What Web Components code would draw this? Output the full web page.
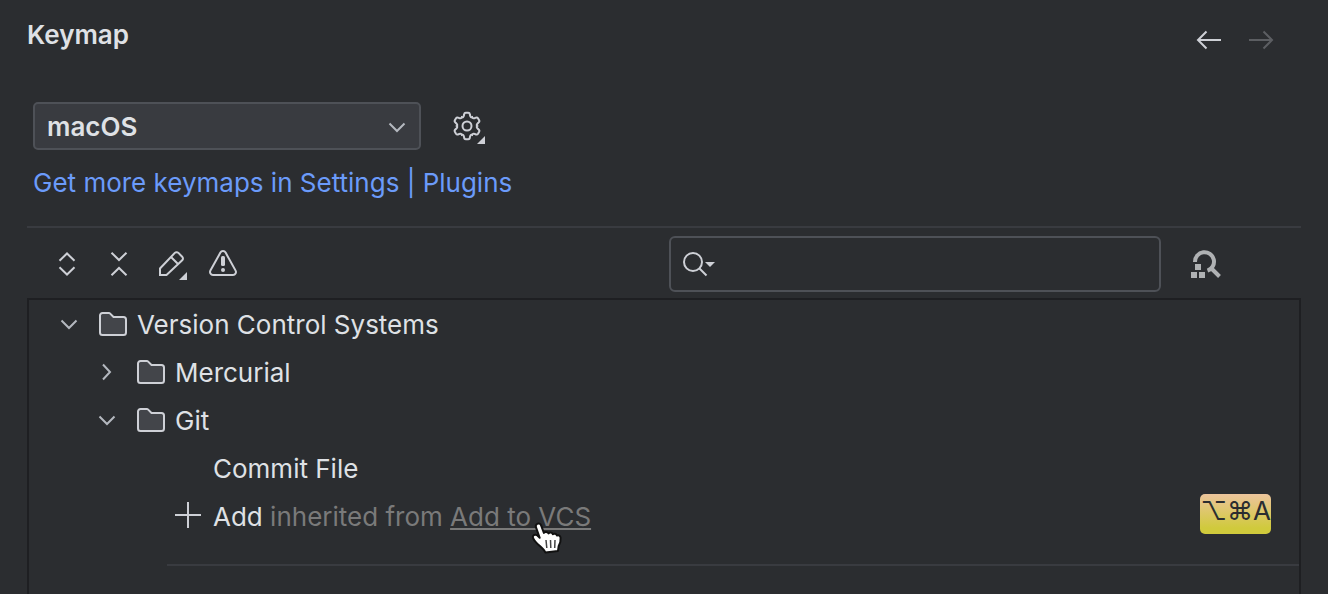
<!DOCTYPE html>
<html lang="en">
<head>
<meta charset="utf-8">
<title>Keymap</title>
<style>
  html {
    background: #2b2d30;
  }
  body {
    margin: 0;
    height: 100vh;
    overflow: hidden;
    font: 26px/32px Inter, "Liberation Sans", sans-serif;
    color: #dfe1e5;
  }
</style>
</head>
<body>
<keymap-settings></keymap-settings>

<script>

/**
 * Outline of the six-toothed settings cog
 *
 * @returns {string}
 */
function cogPath() {
  const point = (radius, degrees) => {
    const angle = degrees * Math.PI / 180;
    return `${ (16 + radius * Math.cos(angle)).toFixed(2) } ${ (16 + radius * Math.sin(angle)).toFixed(2) }`;
  };
  let d = '';
  for (let a = -90; a < 270; a += 60) {
    d += `${ d ? 'L' : 'M' }${ point(11.4, a - 15) }`;
    d += `Q${ point(13.6, a - 12) } ${ point(13.4, a - 5) }L${ point(13.4, a + 5) }`;
    d += `Q${ point(13.6, a + 12) } ${ point(11.4, a + 15) }Q${ point(9, a + 24) } ${ point(10.2, a + 30) }Q${ point(9, a + 36) } ${ point(11.4, a + 45) }`;
  }
  return d + 'z';
}

const ICONS = {
  'back': '<path d="M28 16H5M13.5 7.5L5 16l8.5 8.5"/>',
  'forward': '<path d="M4 16h23M18.5 7.5L27 16l-8.5 8.5"/>',
  'chevron-down': '<path d="M8.5 12.5L16 20l7.5-7.5"/>',
  'chevron-right': '<path d="M12 8.5L19 16l-7 7.5"/>',
  'expand-all': '<path d="M8.5 12.7L16 5.5l7.5 7.2M8.5 19.3L16 26.5l7.5-7.2"/>',
  'collapse-all': '<path d="M8.5 4.7L16 12l7.5-7.3M8.5 27.3L16 20l7.5 7.3"/>',
  'edit': `<path d="M5 27v-6.5L19.8 4.900a2.500 2.500 0 0 1 3.600 0l3.800 3.800a2.500 2.500 0 0 1 0 3.600L11.500 27zM16 9l7.500 7.500"/>
    <path class="solid" d="M32 24v8h-8z"/>`,
  'warning': `<path d="M13.4 4.600L3.400 22.600a3 3 0 0 0 2.600 4.400h20a3 3 0 0 0 2.600-4.400l-10-18a3 3 0 0 0-5.200 0z"/>
    <rect class="solid" x="14" y="8" width="4" height="10" rx="1.5"/><circle class="solid" cx="16" cy="22" r="2"/>`,
  'settings': `<path d="${ cogPath() }"/><circle cx="16" cy="16" r="4.5"/><path class="solid" d="M34 26v8h-8z"/>`,
  'search': `<circle cx="12" cy="14" r="9"/><path d="M18.5 20.5l7 7"/><path class="solid" d="M24 14h10l-5 5z"/>`,
  'find-shortcut': `<path stroke-width="4" d="M5 14A9.5 9.5 0 1 1 17.5 22.7M20 19l9.5 9.5"/>
    <path class="solid" d="M5 16h6v6H5zM1 24h6v6H1zM9 24h6v6H9z"/>`,
  'folder': `<path fill="#43454a" d="M3 7.5A2.5 2.5 0 0 1 5.5 5h6.300a2 2 0 0 1 1.400.6L16.500 9h10A2.500 2.500 0 0 1 29 11.500v13a2.500 2.500 0 0 1-2.500 2.500h-21A2.500 2.500 0 0 1 3 24.500z"/>`,
  'plus': '<path d="M15 2v26M2 15h26"/>'
};

/**
 *
 * UiIcon
 *  - one line icon on a 32px grid, drawn in the current colour
 *
 */
class UiIcon extends HTMLElement {

  connectedCallback() {
    if (this.shadowRoot) { return; }
    this.attachShadow({mode: 'open'}).innerHTML = `
      <style>
        :host { display: block; flex: none; width: 32px; height: 32px; color: #ced0d6; }
        svg { display: block; width: 100%; height: 100%; overflow: visible; }
        .solid { fill: currentColor; stroke: none; }
      </style>
      <svg viewBox="0 0 32 32" fill="none" stroke="currentColor" stroke-width="2" aria-hidden="true">${ ICONS[this.getAttribute('name')] || '' }</svg>
    `;
  }

}

customElements.define('ui-icon', UiIcon);

/**
 *
 * IconButton
 *  - borderless button around an icon
 *
 */
class IconButton extends HTMLElement {

  connectedCallback() {
    if (this.shadowRoot) { return; }
    this.attachShadow({mode: 'open'}).innerHTML = `
      <style>
        :host { display: block; flex: none; }
        button { display: block; padding: 0; border: 0; background: none; }
        button:disabled { opacity: 0.3; }
        ui-icon { color: var(--icon-color, #ced0d6); }
      </style>
      <button type="button" aria-label="${ this.getAttribute('label') }" ${ this.hasAttribute('disabled') ? 'disabled' : '' }>
        <ui-icon name="${ this.getAttribute('icon') }"></ui-icon>
      </button>
    `;
  }

}

customElements.define('icon-button', IconButton);

/**
 *
 * KeymapSelect
 *  - drop-down with the current keymap
 *
 */
class KeymapSelect extends HTMLElement {

  constructor() {
    super();
    this.attachShadow({mode: 'open'}).innerHTML = `
      <style>
        :host { display: grid; align-items: center; width: 388px; }
        select, ui-icon { grid-area: 1 / 1; }
        select {
          appearance: none;
          box-sizing: border-box;
          width: 100%;
          height: 48px;
          padding: 2px 48px 0 12px;
          border: 2px solid #4e5157;
          border-radius: 5px;
          background: #393b40;
          color: inherit;
          font: inherit;
          font-weight: 600;
        }
        ui-icon { justify-self: end; margin: 2px 8px 0 0; color: #b4b8bf; pointer-events: none; }
      </style>
      <select aria-label="Keymap">
        <option>macOS</option>
      </select>
      <ui-icon name="chevron-down"></ui-icon>
    `;
  }

}

customElements.define('keymap-select', KeymapSelect);

/**
 *
 * SearchField
 *
 */
class SearchField extends HTMLElement {

  constructor() {
    super();
    this.attachShadow({mode: 'open'}).innerHTML = `
      <style>
        :host {
          display: flex;
          align-items: center;
          gap: 12px;
          box-sizing: border-box;
          height: 56px;
          padding: 0 10px;
          border: 2px solid #4e5157;
          border-radius: 6px;
        }
        input { flex: 1; min-width: 0; padding: 0; border: 0; outline: 0; background: none; color: inherit; font: inherit; }
      </style>
      <ui-icon name="search"></ui-icon>
      <input type="text" aria-label="Search actions">
    `;
  }

}

customElements.define('search-field', SearchField);

/**
 *
 * TreeRow
 *  - one line of the action tree
 *
 */
class TreeRow extends HTMLElement {

  connectedCallback() {
    if (this.shadowRoot) { return; }
    const level = Number(this.getAttribute('level'));
    const arrow = this.getAttribute('arrow');
    this.setAttribute('role', 'treeitem');
    this.setAttribute('aria-level', level);
    this.attachShadow({mode: 'open'}).innerHTML = `
      <style>
        :host {
          display: flex;
          align-items: center;
          height: 48px;
          padding: 0 28px 0 calc(24px + 38px * ${ level - 1 });
          white-space: nowrap;
        }
        .arrow { margin-right: 12px; color: #b4b8bf; }
        .label { flex: 1; margin-left: 8px; padding-top: 2px; }
      </style>
      <ui-icon class="arrow" name="${ arrow ? 'chevron-' + arrow : '' }"></ui-icon>
      <ui-icon name="${ this.getAttribute('icon') || '' }"></ui-icon>
      <div class="label"><slot></slot></div>
      <slot name="shortcut"></slot>
    `;
  }

}

customElements.define('tree-row', TreeRow);

/**
 *
 * InheritedFrom
 *  - muted note with a link to the parent action and the pointer over it
 *
 */
class InheritedFrom extends HTMLElement {

  constructor() {
    super();
    this.attachShadow({mode: 'open'}).innerHTML = `
      <style>
        :host { display: inline; color: #7a7a7a; }
        a {
          position: relative;
          color: inherit;
          text-decoration: underline 2px;
          text-underline-offset: 2px;
        }
        svg { position: absolute; left: 81px; top: 20px; width: 32px; height: 34px; }
      </style>
      inherited from <a href="#add-to-vcs"><slot></slot><svg viewBox="0 0 32 34" aria-hidden="true">
        <path fill="#fff" stroke="#111" stroke-width="2" stroke-linejoin="round"
          d="M6 3c1.700-1.200 3.600-.2 4.200 1.600l2.700 7.400c.6-1.500 3.700-1.500 4.600.4.900-1.300 3.600-1.100 4.300.8 1.100-.9 3.500-.7 4.100 1.300 1.700-.9 3.500.2 3.700 2.300.3 3-.5 5.600-1.900 8.100l-.7 5-12.600 1.600c-1.500-3.800-6-6.400-9.600-10.400-2-2.300-3.600-4.200-2.800-6 .8-1.800 3.700-1.600 5.200.2l1.500 1.500L5 6.400c-.5-1.300-.2-2.600 1-3.400z"/>
        <path stroke="#444" stroke-width="1.5" d="M15 19l.8 8M19.500 19l.3 8M24 19l-.3 8"/>
      </svg></a>
    `;
  }

}

customElements.define('inherited-from', InheritedFrom);

/**
 *
 * ShortcutBadge
 *
 */
class ShortcutBadge extends HTMLElement {

  constructor() {
    super();
    this.attachShadow({mode: 'open'}).innerHTML = `
      <style>
        :host {
          display: block;
          box-sizing: border-box;
          height: 40px;
          margin-bottom: 4px;
          border-radius: 5px;
          background: linear-gradient(#ecc49c, #d0ca3c 85%);
          color: #2b2d30;
          line-height: 34px;
          text-align: center;
        }
        kbd { font: inherit; }
      </style>
      <kbd><slot></slot></kbd>
    `;
  }

}

customElements.define('shortcut-badge', ShortcutBadge);

/**
 *
 * KeymapSettings
 *  - the whole settings page
 *
 */
class KeymapSettings extends HTMLElement {

  constructor() {
    super();
    this.attachShadow({mode: 'open'}).innerHTML = `
      <style>
        :host {
          display: flex;
          flex-direction: column;
          box-sizing: border-box;
          height: 100%;
          padding: 0 27px;
        }
        header { display: flex; justify-content: space-between; padding-top: 19px; }
        h1 { margin: 0; font-size: 26px; line-height: 32px; font-weight: 600; }
        nav { display: flex; gap: 20px; padding: 5px 24px 0 0; }
        .scheme { display: flex; align-items: center; gap: 30px; padding: 46px 6px 0; }
        .links { padding: 17px 6px 27px; }
        .links a { color: #6b9bfa; text-decoration: none; }
        .toolbar {
          display: flex;
          align-items: center;
          gap: 20px;
          border-top: 2px solid #393b40;
          padding: 8px 79px 6px 24px;
        }
        search-field { flex: 0 1 492px; margin: 0 9px 0 auto; }
        .find { --icon-color: #afb1b3; }
        .tree { flex: 1; border: 2px solid #1e1f22; border-bottom: 0; }
        hr { margin: 24px 0 0 138px; border: 0; border-top: 2px solid #393b40; }
      </style>
      <header>
        <h1>Keymap</h1>
        <nav>
          <icon-button icon="back" label="Back"></icon-button>
          <icon-button icon="forward" label="Forward" disabled></icon-button>
        </nav>
      </header>
      <div class="scheme">
        <keymap-select></keymap-select>
        <icon-button icon="settings" label="Keymap settings"></icon-button>
      </div>
      <div class="links"><a href="#plugins">Get more keymaps in Settings | Plugins</a></div>
      <div class="toolbar">
        <icon-button icon="expand-all" label="Expand all"></icon-button>
        <icon-button icon="collapse-all" label="Collapse all"></icon-button>
        <icon-button icon="edit" label="Edit shortcut"></icon-button>
        <icon-button icon="warning" label="Show conflicts"></icon-button>
        <search-field></search-field>
        <icon-button class="find" icon="find-shortcut" label="Find by shortcut"></icon-button>
      </div>
      <div class="tree" role="tree">
        <tree-row level="1" arrow="down" icon="folder">Version Control Systems</tree-row>
        <tree-row level="2" arrow="right" icon="folder">Mercurial</tree-row>
        <tree-row level="2" arrow="down" icon="folder">Git</tree-row>
        <tree-row level="3">Commit File</tree-row>
        <tree-row level="3" icon="plus">Add <inherited-from>Add to VCS</inherited-from>
          <shortcut-badge slot="shortcut">⌥⌘A</shortcut-badge>
        </tree-row>
        <hr>
      </div>
    `;
  }

}

customElements.define('keymap-settings', KeymapSettings);

</script>
</body>
</html>
